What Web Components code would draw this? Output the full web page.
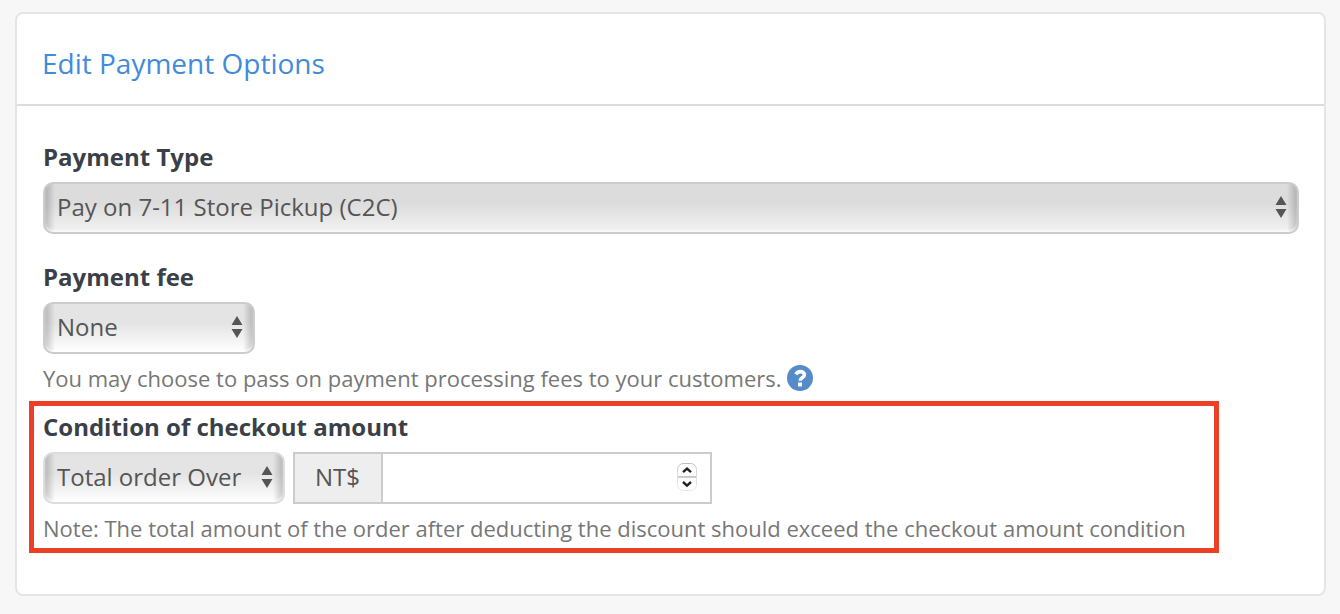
<!DOCTYPE html>
<html lang="en">
<head>
<meta charset="utf-8">
<title>Edit Payment Options</title>
<style>
  body {
    margin: 0;
    padding: 12px 14px 16px 15px;
    background: #f7f7f7;
    color: #555;
    font: 24px/36px "Open Sans", "Noto Sans", sans-serif;
  }
</style>
</head>
<body>
<option-card>
  <span slot="title">Edit Payment Options</span>
  <select-field label="Payment Type" value="Pay on 7-11 Store Pickup (C2C)" tone="dark"></select-field>
  <select-field class="spaced" label="Payment fee" value="None" size="small"></select-field>
  <help-note help>You may choose to pass on payment processing fees to your customers.</help-note>
  <highlight-box>
    <select-field label="Condition of checkout amount" value="Total order Over" size="medium" tone="light">
      <amount-input currency="NT$"></amount-input>
    </select-field>
    <help-note>Note: The total amount of the order after deducting the discount should exceed the checkout amount condition</help-note>
  </highlight-box>
</option-card>

<script>
class OptionCard extends HTMLElement {
  constructor() {
    super();
    this.attachShadow({ mode: "open" }).innerHTML = `
      <style>
        :host { display: block; background: #fff; border: 2px solid #e5e5e5; border-radius: 8px; }
        header { padding: 29px 25px 21px; border-bottom: 2px solid #ddd; }
        h1 { margin: 0; font-size: 28px; line-height: 40px; font-weight: 400; color: #3f8cda; }
        main { padding: 33px 25px 41px 26px; }
        ::slotted(.spaced) { margin-top: 25px; }
      </style>
      <header><h1><slot name="title"></slot></h1></header>
      <main><slot></slot></main>`;
  }
}

class SelectField extends HTMLElement {
  constructor() {
    super();
    this.attachShadow({ mode: "open" }).innerHTML = `
      <style>
        :host { display: block; --top: #e4e4e4; --bottom: #fff; --edge: #ccc; }
        :host([tone="dark"]) { --top: #dcdcdc; --bottom: #f2f2f2; }
        :host([tone="light"]) { --edge: #ddd; }
        label { display: block; margin-bottom: 7px; font-weight: 700; color: #3a3f48; }
        .row { display: flex; gap: 8px; }
        .control { display: grid; flex: 1; align-items: center; }
        :host([size]) .control { flex: none; width: 212px; }
        :host([size="medium"]) .control { width: 242px; }
        select, svg { grid-area: 1 / 1; }
        select {
          appearance: none; box-sizing: border-box; width: 100%; height: 52px; margin: 0;
          padding: 0 36px 2px 12px; border: 2px solid var(--edge); border-radius: 10px;
          background:
            linear-gradient(90deg, #0003, #0000 10px, #0000 calc(100% - 10px), #0003),
            linear-gradient(var(--top), var(--top) 40%, var(--bottom));
          box-shadow: inset 0 -2px 2px #fff9;
          font: inherit; color: #555;
        }
        svg { justify-self: end; margin: 0 12px 2px 0; width: 12px; height: 22px; pointer-events: none; fill: #555; }
      </style>
      <label for="choice"></label>
      <div class="row">
        <div class="control">
          <select id="choice"><option></option></select>
          <svg viewBox="0 0 12 22" aria-hidden="true"><path d="M6 0 11.5 9H.5zM.5 13h11L6 22z"/></svg>
        </div>
        <slot></slot>
      </div>`;
  }
  connectedCallback() {
    this.shadowRoot.querySelector("label").textContent = this.getAttribute("label");
    this.shadowRoot.querySelector("option").textContent = this.getAttribute("value");
  }
}

class AmountInput extends HTMLElement {
  constructor() {
    super();
    this.attachShadow({ mode: "open" }).innerHTML = `
      <style>
        :host { display: flex; box-sizing: border-box; height: 52px; border: 2px solid #ccc; background: #fff; }
        label { padding: 5px 21px 0 20px; background: #eee; border-right: 2px solid #ccc; }
        .box { display: grid; align-items: center; width: 327px; }
        input, svg { grid-area: 1 / 1; }
        input { appearance: textfield; box-sizing: border-box; width: 100%; height: 100%; margin: 0; padding: 0 44px 0 12px; border: 0; background: none; font: inherit; color: inherit; }
        input::-webkit-inner-spin-button { appearance: none; }
        svg { justify-self: end; margin-right: 12px; margin-bottom: 3px; width: 22px; height: 30px; pointer-events: none; }
      </style>
      <label for="amount"></label>
      <div class="box">
        <input id="amount" type="number">
        <svg viewBox="0 0 22 30" aria-hidden="true">
          <defs><linearGradient id="edge" x2="0" y2="1"><stop stop-color="#bbb"/><stop offset=".4" stop-color="#ddd"/><stop offset="1" stop-color="#e8e8e8"/></linearGradient></defs>
          <rect x="1.5" y="1.5" width="19" height="27" rx="6" fill="#fff" stroke="url(#edge)"/>
          <path d="M2 15h18" stroke="#ccc" stroke-width="2"/>
          <path d="M7 10.2 11 6.6l4 3.6M7 20l4 3.6 4-3.6" fill="none" stroke="#222" stroke-width="2.4"/>
        </svg>
      </div>`;
  }
  connectedCallback() {
    this.shadowRoot.querySelector("label").textContent = this.getAttribute("currency");
  }
}

class HelpNote extends HTMLElement {
  constructor() {
    super();
    this.attachShadow({ mode: "open" }).innerHTML = `
      <style>
        :host { display: flex; align-items: center; gap: 5px; margin-top: 7px; font-size: 22px; line-height: 34px; color: #777; }
        button { display: none; padding: 0; border: 0; background: none; }
        :host([help]) button { display: block; }
        svg { display: block; width: 26px; height: 26px; }
      </style>
      <span><slot></slot></span>
      <button type="button" aria-label="Help">
        <svg viewBox="0 0 26 26" aria-hidden="true">
          <circle cx="13" cy="13" r="13" fill="#568bca"/>
          <path d="M8.8 9.2C10 7.4 11.4 6.6 13.2 6.6c2.4 0 4.200 1.300 4.200 3.200 0 3.200-4.300 2.900-4.300 5.900" fill="none" stroke="#fff" stroke-width="3.6"/>
          <path d="M11 17.500h4v4h-4z" fill="#fff"/>
        </svg>
      </button>`;
  }
}

class HighlightBox extends HTMLElement {
  constructor() {
    super();
    this.attachShadow({ mode: "open" }).innerHTML = `
      <style>
        :host { display: block; width: fit-content; margin: 6px 0 0 -14px; padding: 3px 28px 3px 9px; border: 5px solid #eb4025; }
      </style>
      <slot></slot>`;
  }
}

customElements.define("option-card", OptionCard);
customElements.define("select-field", SelectField);
customElements.define("amount-input", AmountInput);
customElements.define("help-note", HelpNote);
customElements.define("highlight-box", HighlightBox);
</script>
</body>
</html>
